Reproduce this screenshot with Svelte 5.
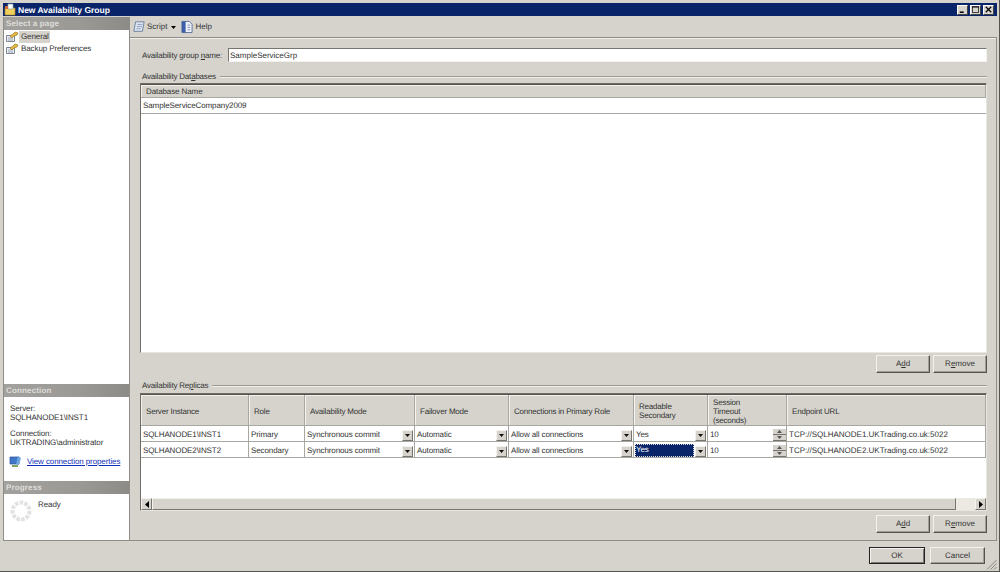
<script>
  const cols = [
    ['Server Instance'], ['Role'], ['Availability Mode'], ['Failover Mode'],
    ['Connections in Primary Role'], ['Readable', 'Secondary'], ['Session', 'Timeout', '(seconds)'], ['Endpoint URL']
  ];
  const rows = [
    { server: 'SQLHANODE1\\INST1', role: 'Primary', url: 'TCP://SQLHANODE1.UKTrading.co.uk:5022', sel: false },
    { server: 'SQLHANODE2\\INST2', role: 'Secondary', url: 'TCP://SQLHANODE2.UKTrading.co.uk:5022', sel: true }
  ];
</script>

{#snippet pageIcon()}
  <svg class="pageicon" width="14" height="12" viewBox="0 0 14 12">
    <path d="M1.500 4.500h8v6h-8z" fill="#eceef3" stroke="#7d8794"/>
    <path d="M3 7h5M3 9h5" stroke="#9aa6b5"/>
    <path d="M5 5l3-2 2-2 3 1-1 2-3 1-2 2z" fill="#e7b93c" stroke="#8a6d1c" stroke-width=".6"/>
  </svg>
{/snippet}

{#snippet arrow()}
  <span class="drop"><svg width="5" height="3" viewBox="0 0 5 3"><path d="M0 0h5L2.500 3z" fill="#111"/></svg></span>
{/snippet}

{#snippet spin()}
  <span class="spin">
    <span class="spinb"><svg width="5" height="3" viewBox="0 0 5 3"><path d="M2.500 0L5 3H0z" fill="#555"/></svg></span>
    <span class="spinb"><svg width="5" height="3" viewBox="0 0 5 3"><path d="M0 0h5L2.500 3z" fill="#555"/></svg></span>
  </span>
{/snippet}

<div class="window">
  <div class="title">
    <svg class="ticon" width="12" height="13" viewBox="0 0 12 13">
      <path d="M1 5h10v7H1z" fill="#f2cf5b" stroke="#a9862a" stroke-width=".7"/>
      <path d="M4 1h5v5H4z" fill="#fff" stroke="#8aa" stroke-width=".7"/>
      <path d="M1 3h3v3H1z" fill="#cf6a3a"/>
    </svg>
    <span class="ttext">New Availability Group</span>
    <div class="wbtns">
      <span class="wb"><svg viewBox="0 0 9 9"><path d="M1 7h5v2H1z" fill="#000"/></svg></span>
      <span class="wb"><svg viewBox="0 0 9 9"><path d="M.5.500h8v8h-8zM0 1.500h9" fill="none" stroke="#000"/></svg></span>
      <span class="wb x"><svg viewBox="0 0 9 9"><path d="M1 1l7 7M8 1L1 8" stroke="#000" stroke-width="1.500"/></svg></span>
    </div>
  </div>

  <div class="main">
    <aside class="left">
      <div class="ghead">Select a page</div>
      <div class="pages">
        <div class="page">{@render pageIcon()}<span class="cur">General</span></div>
        <div class="page">{@render pageIcon()}<span>Backup Preferences</span></div>
      </div>
      <div class="ghead">Connection</div>
      <div class="conn">
        <div class="cblock">Server:<br>SQLHANODE1\INST1</div>
        <div class="cblock">Connection:<br>UKTRADING\administrator</div>
        <div class="linkrow">
          <svg width="13" height="13" viewBox="0 0 13 13">
            <path d="M1 2h9v7H1z" fill="#3f78c9" stroke="#2a4f8f" stroke-width=".7"/>
            <path d="M3 10h6v2H3z" fill="#7aa860"/>
            <path d="M9 1l3 2-2 7-3-1z" fill="#6fa6e0"/>
          </svg>
          <a href="#top">View connection properties</a>
        </div>
      </div>
      <div class="ghead">Progress</div>
      <div class="prog">
        <svg width="22" height="22" viewBox="0 0 22 22"><circle cx="11" cy="11" r="8.500" fill="none" stroke="#e2e2e2" stroke-width="4" stroke-dasharray="3.500 1.300"/></svg>
        <span>Ready</span>
      </div>
    </aside>

    <section class="right">
      <div class="toolbar">
        <svg width="12" height="14" viewBox="0 0 14 14">
          <path d="M3 1h10l-2 11H1z" fill="#dfe6f2" stroke="#5f7699"/>
          <path d="M5 4h6M4.500 6.500h6M4 9h5" stroke="#8296b6"/>
        </svg>
        <span class="tbt">Script</span>
        <svg class="caret" width="5" height="3" viewBox="0 0 5 3"><path d="M0 0h5L2.500 3z" fill="#000"/></svg>
        <span class="tsep"></span>
        <svg width="12" height="14" viewBox="0 0 13 14">
          <path d="M1 1h8l3 3v9H1z" fill="#eef1f8" stroke="#5b6f96"/>
          <path d="M1 1h4v12H1z" fill="#3d5fa8"/>
          <path d="M7 5h3M7 7.500h3M7 10h3" stroke="#7c8fb4"/>
        </svg>
        <span class="tbt">Help</span>
      </div>

      <div class="content">
        <div class="namerow">
          <label for="gname">Availability group <u>n</u>ame:</label>
          <input id="gname" class="sunk" value="SampleServiceGrp" readonly />
        </div>

        <div class="legend db"><span>Availability Dat<u>a</u>bases</span><i></i></div>
        <div class="grid dbgrid">
          <div class="hd dbhd">Database Name</div>
          <div class="dbrow">SampleServiceCompany2009</div>
        </div>
        <div class="btns b1"><button>A<u>d</u>d</button><button>R<u>e</u>move</button></div>

        <div class="legend rep"><span>Availability Re<u>p</u>licas</span><i></i></div>
        <div class="grid repgrid">
          <div class="rtable">
            {#each cols as c}
              <div class="hd rh"><div>{#each c as line}<div>{line}</div>{/each}</div></div>
            {/each}
            {#each rows as r}
              <div class="cell">{r.server}</div>
              <div class="cell">{r.role}</div>
              <div class="cell">Synchronous commit{@render arrow()}</div>
              <div class="cell">Automatic{@render arrow()}</div>
              <div class="cell">Allow all connections{@render arrow()}</div>
              <div class="cell">
                {#if r.sel}<span class="selv">Yes</span>{:else}Yes{/if}{@render arrow()}
              </div>
              <div class="cell nr">10{@render spin()}</div>
              <div class="cell url">{r.url}</div>
            {/each}
          </div>
          <div class="hscroll">
            <span class="sb"><svg width="4" height="7" viewBox="0 0 4 7"><path d="M4 0v7L0 3.500z" fill="#000"/></svg></span>
            <span class="thumb"></span>
            <span class="track"></span>
            <span class="sb"><svg width="4" height="7" viewBox="0 0 4 7"><path d="M0 0v7l4-3.500z" fill="#000"/></svg></span>
          </div>
        </div>
        <div class="btns b2"><button>A<u>d</u>d</button><button>R<u>e</u>move</button></div>
      </div>
    </section>
  </div>

  <div class="footer">
    <button class="def">OK</button>
    <button>Cancel</button>
    <svg class="grip" width="11" height="11" viewBox="0 0 11 11"><path d="M10.500 1L1 10.500M10.500 4.500L4.500 10.500M10.500 8L8 10.500" stroke="#8a8880" fill="none"/></svg>
  </div>
</div>

<style>
  :global(body) { margin: 0; background: #d6d3cd; }
  .window {
    width: 1000px; height: 572px; box-sizing: border-box;
    display: flex; flex-direction: column;
    background: #d6d3cd;
    padding: 3px 2px 1px 3px;
    border-right: 1px solid #55534f;
    border-bottom: 1px solid #55534f;
    font: 8px/10px "Liberation Sans", Arial, sans-serif;
    text-rendering: geometricPrecision;
    letter-spacing: -.1px;
    color: #333;
    overflow: hidden;
  }
  .title {
    height: 13px; flex: none; display: flex; align-items: center; gap: 2px;
    background: #0a246a; color: #fff; font-weight: 700; font-size: 8.500px; letter-spacing: 0;
  }
  .ticon { margin-left: 1px; }
  .wbtns { margin-left: auto; display: flex; gap: 2px; margin-right: 3px; }
  .wb {
    width: 11px; height: 10px; background: #d6d3cd; display: flex; align-items: center; justify-content: center;
    border: 1px solid; border-color: #fff #444 #444 #fff; box-sizing: border-box;
  }
  .wb svg { width: 7px; height: 7px; }
  .main { height: 524px; flex: none; display: flex; margin-top: 1px; }
  .left {
    width: 127px; box-sizing: border-box; flex: none; background: #fff; display: flex; flex-direction: column;
    border-right: 1px solid #8f8d88; border-bottom: 1px solid #8f8d88; border-left: 1px solid #8f8d88;
  }
  .ghead {
    height: 13px; flex: none; padding-left: 2px; line-height: 13px; font-size: 8px; font-weight: 700; letter-spacing: .15px;
    color: #dfdedb;
    background: linear-gradient(90deg, #a3a19d, #9b9995 60%, #8d8b87);
  }
  .pages { height: 353px; padding-top: 1px; flex: none; }
  .page { height: 12px; display: flex; align-items: center; padding-left: 1px; }
  .page span { padding: 0 1px 0 2px; height: 12px; line-height: 12px; }
  .cur { background: #d6d3cd; }
  .pageicon { flex: none; }
  .conn { height: 77px; flex: none; padding: 7px 0 0 6px; line-height: 9px; }
  .cblock { margin-bottom: 7px; }
  .linkrow { display: flex; align-items: center; gap: 5px; white-space: nowrap; margin: 8px 0 0 -1px; }
  .linkrow a { color: #1030b8; }
  .prog { flex: 1; display: flex; align-items: flex-start; padding: 6px 0 0 6px; gap: 6px; }

  .right { flex: 1; min-width: 0; display: flex; flex-direction: column; }
  .toolbar {
    height: 21px; box-sizing: border-box; flex: none; display: flex; align-items: center; gap: 1px; padding-left: 3px;
    border-bottom: 1px solid #8f8d88; box-shadow: 0 1px 0 #f1efe9;
  }
  .tbt { margin-left: 1px; letter-spacing: 0; }
  .caret { margin-left: 3px; }
  .tsep { width: 3px; }
  .content { padding: 10px 9px 0 10px; flex: 1; border-right: 1px solid #8f8d88; border-bottom: 1px solid #8f8d88; }
  .namerow { display: flex; align-items: center; gap: 6px; height: 14px; padding-left: 2px; }
  label { white-space: nowrap; padding-top: 1px; letter-spacing: -.2px; }
  .sunk {
    flex: 1; min-width: 0; height: 14px; box-sizing: border-box; padding: 0 1px; margin: 0;
    font: inherit; color: #333; background: #fff; letter-spacing: 0;
    border: 1px solid; border-color: #77756f #f4f2ec #f4f2ec #77756f; outline: none; border-radius: 0;
    text-rendering: inherit;
  }
  .legend { display: flex; align-items: center; gap: 4px; height: 11px; padding-left: 2px; letter-spacing: -.2px; }
  .legend i { flex: 1; height: 0; border-top: 1px solid #9c9a94; border-bottom: 1px solid #f1efe9; }
  .legend.db { margin-top: 9px; }
  .legend.rep { margin-top: 7px; }
  .grid {
    border: 1px solid; border-color: #6e6c67 #e8e6e0 #e8e6e0 #6e6c67;
    box-shadow: inset 0 1px 0 #55534f;
    background: #fff; box-sizing: border-box;
  }
  .dbgrid { height: 270px; margin-top: 1px; padding-top: 1px; }
  .hd { background: #d6d3cd; padding-left: 5px; display: flex; align-items: center;
    border-right: 1px solid #a9a7a1; border-bottom: 1px solid #a9a7a1; box-sizing: border-box;
    box-shadow: inset 1px 1px 0 #f5f3ed;
  }
  .dbhd { height: 13px; padding-top: 2px; }
  .dbrow { height: 16px; line-height: 15px; padding-left: 2px; border-bottom: 1px solid #a9a7a1; box-sizing: border-box; }
  .btns { display: flex; justify-content: flex-end; gap: 3px; }
  .b1 { margin-top: 2px; }
  .b2 { margin-top: 4px; }
  button {
    width: 54px; height: 18px; box-sizing: border-box; padding: 0; margin: 0;
    font: inherit; color: #333; background: #d6d3cd; border-radius: 0; text-rendering: inherit; letter-spacing: 0;
    border: 1px solid; border-color: #f4f2ec #55534f #55534f #f4f2ec;
    box-shadow: inset -1px -1px 0 #a09e98;
  }
  .repgrid { height: 118px; margin-top: 2px; padding-top: 1px; display: flex; flex-direction: column; }
  .rtable {
    flex: 1; display: grid; align-content: start;
    grid-template-columns: 108px 56px 110px 94px 125px 74px 79px 1fr;
    grid-template-rows: 31px 16px 16px;
  }
  .rh { line-height: 9px; padding-top: 2px; letter-spacing: -.2px; }
  .cell {
    display: flex; align-items: center; justify-content: space-between; padding: 2px 1px 0 2px;
    border-right: 1px solid #a9a7a1; border-bottom: 1px solid #a9a7a1; box-sizing: border-box; white-space: nowrap; min-width: 0;
  }
  .cell.nr { padding-right: 0; }
  .cell.url { letter-spacing: 0; }
  .drop {
    width: 11px; height: 11px; flex: none; align-self: flex-end; background: #d6d3cd; box-sizing: border-box;
    border: 1px solid; border-color: #f4f2ec #77756f #77756f #f4f2ec;
    display: flex; align-items: center; justify-content: center;
  }
  .selv {
    flex: 1; align-self: stretch; background: #0a246a; color: #fff; outline: 1px dotted #ddd; outline-offset: -1px; line-height: 12px; margin: 0 1px 0 -1px; padding-left: 1px;
  }
  .spin { width: 13px; height: 12px; display: flex; flex-direction: column; flex: none; align-self: flex-end; }
  .spinb {
    flex: 1; background: #d6d3cd; display: flex; align-items: center; justify-content: center;
    border-bottom: 1px solid #77756f; box-sizing: border-box;
  }
  .spinb svg { width: 5px; height: 3px; }
  .hscroll { height: 12px; flex: none; display: flex; background: #ece9e3; }
  .sb {
    width: 11px; flex: none; background: #d6d3cd; display: flex; align-items: center; justify-content: center;
    border: 1px solid; border-color: #f4f2ec #77756f #77756f #f4f2ec; box-sizing: border-box;
  }
  .thumb { width: 804px; background: #d6d3cd; border: 1px solid; border-color: #f4f2ec #77756f #77756f #f4f2ec; box-sizing: border-box; }
  .track { flex: 1; }

  .footer {
    flex: 1; display: flex; gap: 5px; align-items: flex-start; justify-content: flex-end; padding: 6px 12px 0 0;
    position: relative;
  }
  .footer button { height: 17px; width: 55px; }
  .footer .def { width: 56px; border-color: #222; box-shadow: inset 1px 1px 0 #f4f2ec, inset -1px -1px 0 #77756f; }
  .grip { position: absolute; right: 0; bottom: 0; }
</style>
